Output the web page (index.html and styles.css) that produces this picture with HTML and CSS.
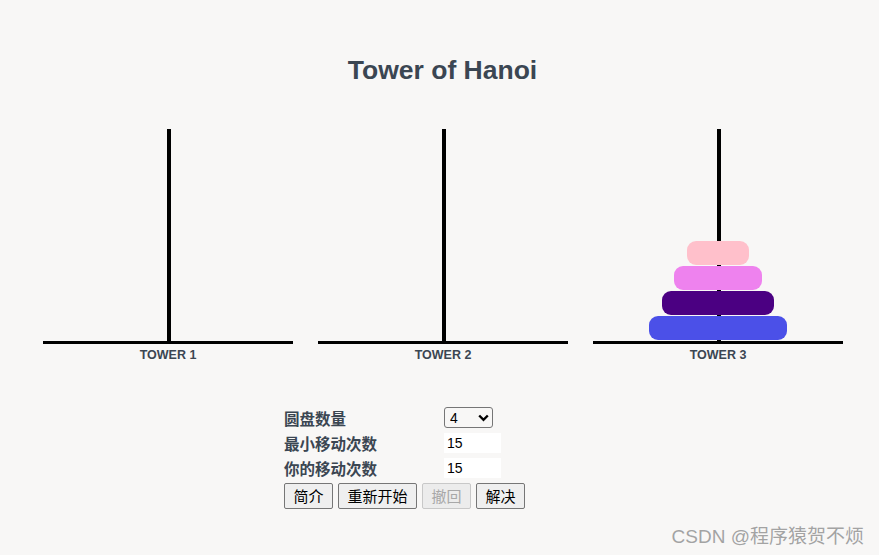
FILE: index.html
```html
<!DOCTYPE html>
<html lang="zh">
<head>
<meta charset="utf-8">
<title>Tower of Hanoi</title>
<link rel="stylesheet" href="styles.css">
</head>
<body>
  <h1 class="title">Tower of Hanoi</h1>
  <div class="towers">
    <div class="tower">
      <div class="rod"></div>
      <div class="base"></div>
      <div class="tower-label">TOWER 1</div>
    </div>
    <div class="tower">
      <div class="rod"></div>
      <div class="base"></div>
      <div class="tower-label">TOWER 2</div>
    </div>
    <div class="tower">
      <div class="rod">
        <div class="disk disk-1"></div>
        <div class="disk disk-2"></div>
        <div class="disk disk-3"></div>
        <div class="disk disk-4"></div>
      </div>
      <div class="base"></div>
      <div class="tower-label">TOWER 3</div>
    </div>
  </div>

  <div class="panel">
    <div class="row-label">圆盘数量</div>
    <div class="select-wrap">
      <select class="count">
        <option>3</option>
        <option selected>4</option>
        <option>5</option>
        <option>6</option>
      </select>
      <svg class="chevron" width="11" height="8" viewBox="0 0 11 8"><path d="M1.2 1.5 L5.5 5.8 L9.8 1.5" fill="none" stroke="#000" stroke-width="2.4"/></svg>
    </div>
    <div class="row-label">最小移动次数</div>
    <input class="num" type="text" value="15" readonly>
    <div class="row-label">你的移动次数</div>
    <input class="num" type="text" value="15" readonly>
    <div class="buttons">
      <button class="btn">简介</button>
      <button class="btn">重新开始</button>
      <button class="btn" disabled>撤回</button>
      <button class="btn">解决</button>
    </div>
  </div>

  <div class="watermark">CSDN @程序猿贺不烦</div>
</body>
</html>
```

FILE: styles.css
```css
html, body {
  margin: 0;
  padding: 0;
  background: #f8f7f6;
  height: 100%;
}

body {
  position: relative;
  font-family: "Liberation Sans", "Noto Sans CJK SC", sans-serif;
  color: #3b4652;
  overflow: hidden;
}

.title {
  margin: 0;
  padding: 54px 0 0 6px;
  font-size: 26.5px;
  line-height: 32px;
  font-weight: bold;
  text-align: center;
  color: #3b4652;
}

.towers {
  display: flex;
  gap: 25px;
  margin: 43px 0 0 43px;
  width: 800px;
}

.tower {
  width: 250px;
  display: flex;
  flex-direction: column;
}

.rod {
  height: 212px;
  display: flex;
  flex-direction: column;
  justify-content: flex-end;
  align-items: center;
  gap: 1px;
  padding-bottom: 1px;
  box-sizing: border-box;
  background: linear-gradient(#000, #000) 124px 0 / 4px 100% no-repeat;
}

.disk {
  height: 24px;
  border-radius: 9px;
  flex: none;
}

.disk-1 { width: 62px; background: #ffc0cb; }
.disk-2 { width: 88px; background: #ee82ee; }
.disk-3 { width: 112px; background: #4b0082; }
.disk-4 { width: 138px; background: #4b50e8; }

.base {
  height: 3px;
  background: #000;
}

.tower-label {
  margin-top: 4px;
  font-size: 12.5px;
  line-height: 14px;
  font-weight: bold;
  text-align: center;
  color: #3b4652;
}

.panel {
  margin: 45px 0 0 284px;
  display: grid;
  grid-template-columns: 160px auto;
  row-gap: 5px;
  justify-content: start;
  align-items: center;
}

.row-label {
  font-family: "Noto Sans CJK SC", sans-serif;
  font-size: 15.5px;
  font-weight: bold;
  line-height: 20px;
  color: #3b4652;
}

.select-wrap {
  position: relative;
  width: 49px;
  height: 21px;
}

.count {
  appearance: none;
  -webkit-appearance: none;
  width: 49px;
  height: 21px;
  box-sizing: border-box;
  border: 1px solid #767676;
  border-radius: 3px;
  background: #f8f7f6;
  font-family: "Liberation Sans", sans-serif;
  font-size: 14px;
  color: #000;
  padding: 0 0 0 5px;
  margin: 0;
  display: block;
}

.chevron {
  position: absolute;
  right: 4px;
  top: 7px;
  pointer-events: none;
}

.num {
  width: 57px;
  height: 20px;
  box-sizing: border-box;
  border: none;
  background: #fff;
  font-family: "Liberation Sans", sans-serif;
  font-size: 14px;
  color: #000;
  padding: 0 3px;
  margin: 0;
  outline: none;
}

.buttons {
  grid-column: 1 / 3;
  display: flex;
  gap: 5px;
}

.btn {
  font-family: "Noto Sans CJK SC", sans-serif;
  font-size: 15px;
  line-height: 20px;
  height: 26px;
  padding: 2px 8.5px;
  border: 1px solid #767676;
  border-radius: 2px;
  background: #efefef;
  color: #000;
  box-sizing: border-box;
  margin: 0;
}

.btn:disabled {
  color: #a8a8a8;
  border-color: #c8c8c8;
  background: #ececec;
}

.watermark {
  position: absolute;
  right: 15px;
  bottom: 7px;
  font-family: "Liberation Sans", "Noto Sans CJK SC", sans-serif;
  font-size: 19px;
  color: #a3a3a3;
  text-shadow: 0 0 1px #fff;
}
```
